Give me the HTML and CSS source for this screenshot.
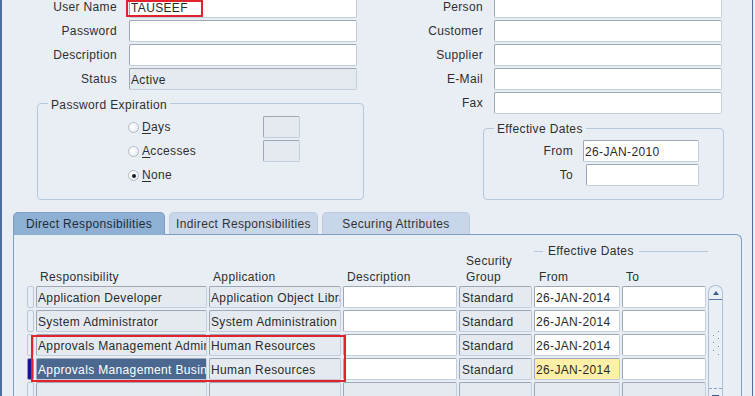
FILE: index.html
```html
<!DOCTYPE html>
<html>
<head>
<meta charset="utf-8">
<title>Users</title>
<link rel="stylesheet" href="styles.css">
</head>
<body>
<div class="window">
  <div class="top">
    <div class="col-left">
      <div class="form">
        <div class="lbl">User Name</div><div class="fld">TAUSEEF</div>
        <div class="lbl">Password</div><div class="fld"></div>
        <div class="lbl">Description</div><div class="fld"></div>
        <div class="lbl">Status</div><div class="fld ro">Active</div>
      </div>
      <div class="group pwd">
        <span class="group-title">Password Expiration</span>
        <div class="radio-grid">
          <div class="radio"><span class="dot"></span><span><u>D</u>ays</span></div><div class="fld ro"></div>
          <div class="radio"><span class="dot"></span><span><u>A</u>ccesses</span></div><div class="fld ro"></div>
          <div class="radio"><span class="dot on"></span><span><u>N</u>one</span></div><div></div>
        </div>
      </div>
    </div>
    <div class="col-right">
      <div class="form right">
        <div class="lbl">Person</div><div class="fld"></div>
        <div class="lbl">Customer</div><div class="fld"></div>
        <div class="lbl">Supplier</div><div class="fld"></div>
        <div class="lbl">E-Mail</div><div class="fld"></div>
        <div class="lbl">Fax</div><div class="fld"></div>
      </div>
      <div class="group eff">
        <span class="group-title">Effective Dates</span>
        <div class="eff-grid">
          <div class="lbl">From</div><div class="fld">26-JAN-2010</div>
          <div class="lbl">To</div><div class="fld to"></div>
        </div>
      </div>
    </div>
  </div>

  <div class="tabs">
    <div class="tab active t1">Direct Responsibilities</div>
    <div class="tab t2">Indirect Responsibilities</div>
    <div class="tab t3">Securing Attributes</div>
  </div>

  <div class="panel">
    <div class="thead">
      <div class="hd-eff"><span class="hl short"></span><span>Effective Dates</span><span class="hl long"></span></div>
      <div class="hd c-resp">Responsibility</div>
      <div class="hd c-app">Application</div>
      <div class="hd c-desc">Description</div>
      <div class="hd c-sec"><div class="sec1">Security</div><div>Group</div></div>
      <div class="hd c-from">From</div>
      <div class="hd c-to">To</div>
    </div>

    <div class="tbody">
      <div class="rows">
        <div class="row">
          <div class="ind"></div>
          <div class="fld ro">Application Developer</div>
          <div class="fld ro">Application Object Library</div>
          <div class="fld"></div>
          <div class="fld ro pad2">Standard</div>
          <div class="fld">26-JAN-2014</div>
          <div class="fld"></div>
        </div>
        <div class="row">
          <div class="ind"></div>
          <div class="fld ro">System Administrator</div>
          <div class="fld ro">System Administration</div>
          <div class="fld"></div>
          <div class="fld ro pad2">Standard</div>
          <div class="fld">26-JAN-2014</div>
          <div class="fld"></div>
        </div>
        <div class="row">
          <div class="ind"></div>
          <div class="fld ro">Approvals Management Administrator</div>
          <div class="fld ro">Human Resources</div>
          <div class="fld"></div>
          <div class="fld ro pad2">Standard</div>
          <div class="fld">26-JAN-2014</div>
          <div class="fld"></div>
        </div>
        <div class="row">
          <div class="ind cur"></div>
          <div class="fld sel">Approvals Management Business Analyst</div>
          <div class="fld ro">Human Resources</div>
          <div class="fld"></div>
          <div class="fld ro pad2">Standard</div>
          <div class="fld focus">26-JAN-2014</div>
          <div class="fld"></div>
        </div>
        <div class="row">
          <div class="ind"></div>
          <div class="fld ro"></div>
          <div class="fld ro"></div>
          <div class="fld ro"></div>
          <div class="fld ro"></div>
          <div class="fld ro"></div>
          <div class="fld ro"></div>
        </div>
      </div>

      <div class="scroll">
        <div class="up"><span class="tri"></span></div>
        <div class="track">
          <svg class="grip" width="13" height="28" viewBox="0 0 13 28">
            <rect x="9" y="0" width="1" height="1" fill="#ffffff"/><rect x="8" y="1" width="1" height="1" fill="#6f8fbc"/>
            <rect x="4" y="4" width="1" height="1" fill="#ffffff"/><rect x="3" y="5" width="1" height="1" fill="#6f8fbc"/>
            <rect x="9" y="7" width="1" height="1" fill="#ffffff"/><rect x="8" y="8" width="1" height="1" fill="#6f8fbc"/>
            <rect x="4" y="11" width="1" height="1" fill="#ffffff"/><rect x="3" y="12" width="1" height="1" fill="#6f8fbc"/>
            <rect x="9" y="15" width="1" height="1" fill="#ffffff"/><rect x="8" y="16" width="1" height="1" fill="#6f8fbc"/>
            <rect x="4" y="19" width="1" height="1" fill="#ffffff"/><rect x="3" y="20" width="1" height="1" fill="#6f8fbc"/>
            <rect x="9" y="23" width="1" height="1" fill="#ffffff"/><rect x="8" y="24" width="1" height="1" fill="#6f8fbc"/>
          </svg>
        </div>
        <div class="down"><span class="bar"></span></div>
      </div>
    </div>
  </div>

  <div class="annot a1"></div>
  <div class="annot a2"></div>
</div>
</body>
</html>
```

FILE: styles.css
```css
* { box-sizing: border-box; }

html, body {
  margin: 0;
  padding: 0;
}

body {
  width: 755px;
  height: 396px;
  overflow: hidden;
  background: #e9eef5;
  font-family: "Liberation Sans", Arial, sans-serif;
  font-size: 12px;
  letter-spacing: 0.35px;
  color: #2e2e2e;
}

.window {
  position: relative;
  width: 753px;
  height: 396px;
  overflow: hidden;
  border-left: 2px solid #4d6d9d;
  border-right: 1px solid #4d6d9d;
}

/* ---------- top form ---------- */
.top {
  display: flex;
  margin-top: -4px;
}

.col-left { width: 362px; flex: none; }
.col-right { width: 370px; flex: none; }

.form {
  display: grid;
  grid-template-columns: 115px 228px;
  column-gap: 12px;
  row-gap: 2px;
  grid-auto-rows: 22px;
}

.form.right {
  grid-template-columns: 119px 228px;
  column-gap: 11px;
}

.lbl {
  text-align: right;
  padding-top: 1px;
  line-height: 21px;
  white-space: nowrap;
}

.fld {
  height: 22px;
  border: 1px solid;
  border-color: #9ea7b3 #c3cedc #c3cedc #9ea7b3;
  border-radius: 2px;
  background: #ffffff;
  padding: 1px 1px 0;
  line-height: 20px;
  white-space: nowrap;
  overflow: hidden;
  color: #2a2a2a;
}

.fld.ro { background: #e5eaf1; }
.fld.pad2 { padding-left: 2px; }
.fld.sel { background: #4b6891; color: #ffffff; }
.fld.focus { background: #fff0a8; }

/* ---------- group boxes ---------- */
.group {
  position: relative;
  border: 1px solid #b8c7da;
  border-radius: 4px;
}

.group-title {
  position: absolute;
  top: -6px;
  left: 10px;
  padding: 0 3px;
  line-height: 14px;
  background: #e9eef5;
  white-space: nowrap;
}

.eff .group-title { top: -7px; }

.pwd {
  margin: 13px 0 0 35px;
  width: 327px;
  height: 97px;
  padding: 12px 0 0 90px;
}

.radio-grid {
  display: grid;
  grid-template-columns: 135px 37px;
  grid-auto-rows: 22px;
  row-gap: 2px;
}

.radio {
  display: flex;
  align-items: center;
  gap: 3px;
  padding-top: 1px;
  line-height: 21px;
  white-space: nowrap;
}

.radio u { text-decoration-thickness: 1px; text-underline-offset: 2px; }

.dot {
  width: 11px;
  height: 11px;
  flex: none;
  border: 1px solid #b3bcc8;
  border-radius: 50%;
  background: radial-gradient(circle at 40% 35%, #ffffff 0%, #f3f5f8 50%, #d9e0e8 100%);
  display: flex;
  align-items: center;
  justify-content: center;
}

.dot.on::after {
  content: "";
  width: 4px;
  height: 4px;
  border-radius: 50%;
  background: #1e1e1e;
}

.eff {
  margin: 14px 0 0 119px;
  width: 241px;
  height: 72px;
  padding-top: 11px;
}

.eff-grid {
  display: grid;
  grid-template-columns: 89px 116px;
  column-gap: 10px;
  row-gap: 2px;
  grid-auto-rows: 22px;
}

.fld.to { margin-left: 3px; width: 113px; }

/* ---------- tabs ---------- */
.tabs {
  display: flex;
  gap: 4px;
  margin: 12px 0 0 11px;
  height: 22px;
  align-items: flex-start;
}

.tab {
  height: 22px;
  padding-top: 2px;
  line-height: 19px;
  text-align: center;
  white-space: nowrap;
  background: #c8d6e9;
  border: 1px solid #bccbe0;
  border-bottom: none;
  border-radius: 5px 5px 0 0;
  color: #333333;
}

.tab.active {
  position: relative;
  z-index: 1;
  height: 23px;
  margin-bottom: -1px;
  background: #8fb0d5;
  border-color: #7f9dc5;
  color: #1e2a3a;
}

.t1 { width: 152px; }
.t2 { width: 149px; }
.t3 { width: 148px; }

/* ---------- panel & table ---------- */
.panel {
  margin-left: 11px;
  width: 729px;
  height: 200px;
  border: 1px solid #7f9dc5;
  border-bottom: none;
  border-top-right-radius: 6px;
  padding: 9px 0 0 13px;
}

.thead {
  display: grid;
  grid-template-columns: 7px 171px 132px 114px 73px 86px 84px 15px;
  grid-template-rows: 14px 24px;
  column-gap: 2px;
  row-gap: 2px;
  margin-bottom: 2px;
}

.hd {
  grid-row: 2;
  align-self: end;
  line-height: 14px;
  padding-left: 4px;
  white-space: nowrap;
}

.c-resp { grid-column: 2; }
.c-app { grid-column: 3; }
.c-desc { grid-column: 4; }
.c-sec { grid-column: 5; grid-row: 1 / 3; padding-left: 7px; }
.c-from { grid-column: 6; padding-left: 5px; }
.c-to { grid-column: 7; }
.sec1 { margin-bottom: 2px; }

.hd-eff {
  grid-column: 6 / 8;
  grid-row: 1;
  margin-right: -2px;
  display: flex;
  align-items: center;
  line-height: 14px;
  white-space: nowrap;
}

.hl { height: 1px; background: #b8c7da; }
.hl.short { width: 9px; flex: none; margin-right: 5px; }
.hl.long { flex: 1; margin-left: 5px; }

.tbody {
  display: flex;
  gap: 2px;
  align-items: flex-start;
}

.rows {
  display: flex;
  flex-direction: column;
  gap: 2px;
}

.row {
  display: grid;
  grid-template-columns: 7px 171px 132px 114px 73px 86px 84px;
  column-gap: 2px;
  height: 22px;
}

.ind {
  border: 1px solid #bac8da;
  border-radius: 2px;
  background: #e9eef5;
}

.ind.cur { background: #15158c; border-color: #8899bb; }

.scroll {
  width: 15px;
  flex: none;
  margin-top: -1px;
  height: 120px;
  border: 1px solid #afc0d6;
  border-bottom: none;
  border-radius: 7px 7px 0 0;
  display: flex;
  flex-direction: column;
  background: #eaeff6;
}

.up {
  height: 14px;
  flex: none;
  border-bottom: 1px solid #5676a4;
  display: flex;
  justify-content: center;
  padding-top: 5px;
}

.tri {
  width: 0;
  height: 0;
  border-left: 3px solid transparent;
  border-right: 3px solid transparent;
  border-bottom: 4px solid #3c5c8d;
}

.track {
  height: 88px;
  flex: none;
  padding-top: 30px;
}

.grip { display: block; margin-left: 1px; }

.down {
  flex: 1;
  border-top: 1px dashed #8aa3c6;
  display: flex;
  justify-content: center;
  padding-top: 6px;
}

.bar { width: 7px; height: 1px; background: #3c5c8d; }

/* ---------- annotations ---------- */
.annot {
  position: absolute;
  border: 2px solid #e1232c;
  pointer-events: none;
}

.a1 { left: 124px; top: 0; width: 77px; height: 17px; }
.a2 { left: 29px; top: 335px; width: 315px; height: 47px; }
```
